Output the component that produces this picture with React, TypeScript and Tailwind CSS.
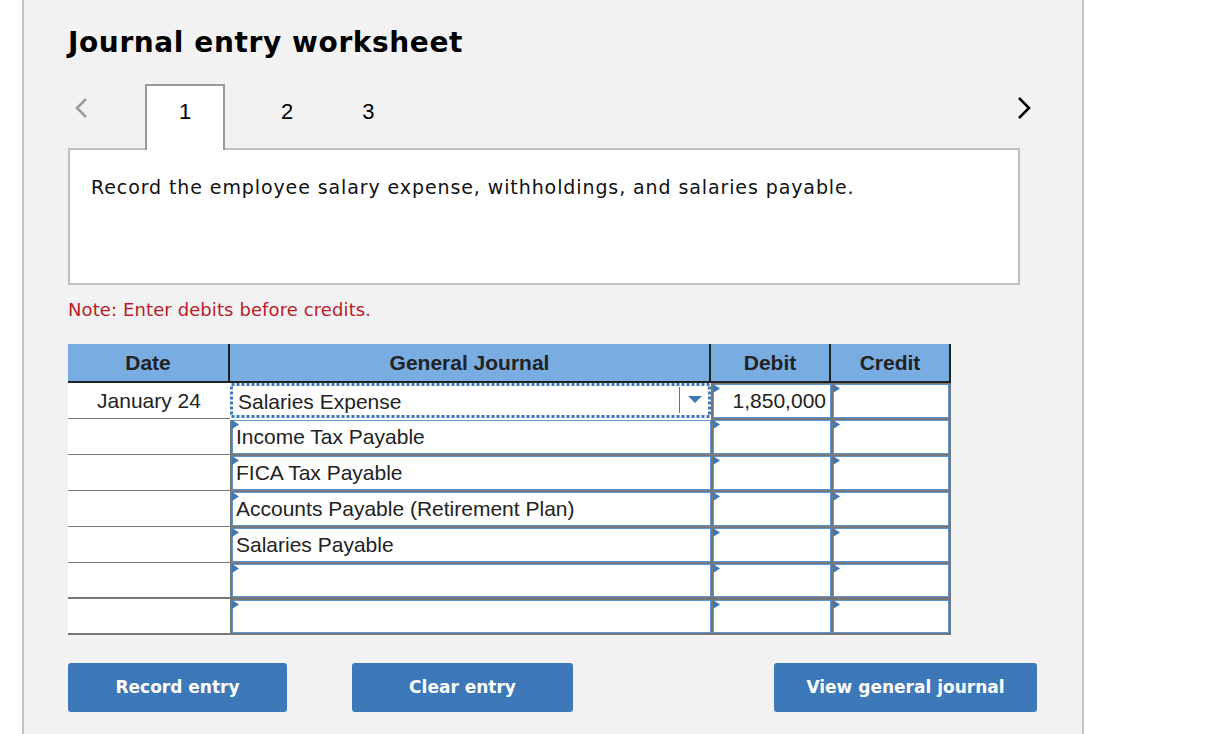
import React from 'react';

const rows = [
  { date: 'January 24', account: 'Salaries Expense', debit: '1,850,000', credit: '' },
  { date: '', account: 'Income Tax Payable', debit: '', credit: '' },
  { date: '', account: 'FICA Tax Payable', debit: '', credit: '' },
  { date: '', account: 'Accounts Payable (Retirement Plan)', debit: '', credit: '' },
  { date: '', account: 'Salaries Payable', debit: '', credit: '' },
  { date: '', account: '', debit: '', credit: '' },
  { date: '', account: '', debit: '', credit: '' },
];

const Flag = () => (
  <svg className="absolute left-[-1px] top-[-1px]" width="7" height="9" viewBox="0 0 7 9">
    <path d="M0 0 L7 4.5 L0 9 Z" fill="#3d78b8" />
  </svg>
);

const InputCell = ({ value, align = 'left', last = false }: { value: string; align?: 'left' | 'right'; last?: boolean }) => (
  <div className={`bg-[#777777] pl-[2px] pb-[2px] pt-[1px] ${last ? 'pr-[2px]' : ''}`}>
    <div
      className={`relative h-full bg-white border border-[#5f94d4] flex items-center text-[21px] text-[#222] ${
        align === 'right' ? 'justify-end pr-[4px]' : 'pl-[3px]'
      }`}
    >
      <Flag />
      {value}
    </div>
  </div>
);

const FocusedSelect = ({ value }: { value: string }) => (
  <div className="relative bg-white flex items-center pl-[8px] text-[21px] text-[#222]">
    <svg className="absolute inset-0 pointer-events-none" width="481" height="36">
      <rect
        x="1.5"
        y="1.5"
        width="478"
        height="32"
        fill="none"
        stroke="#3d78b8"
        strokeWidth="3"
        strokeDasharray="3 2"
      />
    </svg>
    {value}
    <div className="absolute left-[449px] top-[4px] h-[26px] w-px bg-[#3d78b8]" />
    <svg className="absolute left-[458px] top-[13px]" width="14" height="8" viewBox="0 0 14 8">
      <path d="M0 0 L14 0 L7 7 Z" fill="#3d78b8" />
    </svg>
  </div>
);

export default function App() {
  return (
    <div className="min-h-[734px] bg-white">
      <div className="ml-[22px] w-[1062px] min-h-[734px] bg-[#f2f2f2] border-x-2 border-[#c4c4c4] pl-[44px] pt-[26px] font-['DejaVu_Sans',sans-serif]">
        <h1 className="text-[28px] leading-[34px] font-bold tracking-[0.6px] text-black">Journal entry worksheet</h1>

        <div className="relative z-10 mt-[24px] flex h-[66px] w-[968px] items-start font-['Liberation_Sans',Arial,sans-serif] text-[22px] leading-[24px] text-black">
          <svg className="mt-[13px] ml-[5px]" width="16" height="22" viewBox="0 0 16 22">
            <path d="M13 2 L4 11 L13 20" fill="none" stroke="#9a9a9a" strokeWidth="2.5" />
          </svg>
          <div className="ml-[56px] h-[66px] w-[80px] border-x-2 border-t-2 border-[#9a9a9a] bg-white pt-[14px] text-center">
            1
          </div>
          <div className="ml-[56px] pt-[16px]">2</div>
          <div className="ml-[69px] pt-[16px]">3</div>
          <svg className="ml-auto mt-[12px] mr-[4px]" width="16" height="24" viewBox="0 0 16 24">
            <path d="M3 2 L13 12 L3 22" fill="none" stroke="#000" strokeWidth="2.5" />
          </svg>
        </div>

        <div className="mt-[-2px] h-[137px] w-[952px] border-2 border-[#c0c0c0] bg-white pl-[21px] pt-[24px] text-[19px] leading-[26px] tracking-[0.9px] text-[#111]">
          Record the employee salary expense, withholdings, and salaries payable.
        </div>

        <p className="mt-[13px] text-[18px] leading-[24px] tracking-[0.1px] text-[#bb1a28]">Note: Enter debits before credits.</p>

        <div className="mt-[22px] w-[883px] font-['Liberation_Sans',Arial,sans-serif]">
          <div className="grid h-[39px] grid-cols-[162px_481px_120px_120px] border-b-2 border-[#222] bg-[#79ade2] text-[21px] font-bold text-[#222]">
            <div className="flex items-center justify-center border-r-2 border-[#222]">Date</div>
            <div className="flex items-center justify-center border-r-2 border-[#222]">General Journal</div>
            <div className="flex items-center justify-center border-r-2 border-[#222]">Debit</div>
            <div className="flex items-center justify-center border-r-2 border-[#222]">Credit</div>
          </div>
          {rows.map((row, i) => (
            <div key={i} className="grid h-[36px] grid-cols-[162px_481px_120px_120px]">
              <div className="flex items-center justify-center border-b-2 border-[#777777] bg-white text-[21px] text-[#222]">
                {row.date}
              </div>
              {i === 0 ? <FocusedSelect value={row.account} /> : <InputCell value={row.account} />}
              <InputCell value={row.debit} align="right" />
              <InputCell value={row.credit} last />
            </div>
          ))}
        </div>

        <div className="mt-[28px] flex text-[17px] font-bold text-white">
          <button className="h-[49px] w-[219px] rounded-[3px] bg-[#3d78b8]">Record entry</button>
          <button className="ml-[65px] h-[49px] w-[221px] rounded-[3px] bg-[#3d78b8]">Clear entry</button>
          <button className="ml-[201px] h-[49px] w-[263px] rounded-[3px] bg-[#3d78b8]">View general journal</button>
        </div>
      </div>
    </div>
  );
}
